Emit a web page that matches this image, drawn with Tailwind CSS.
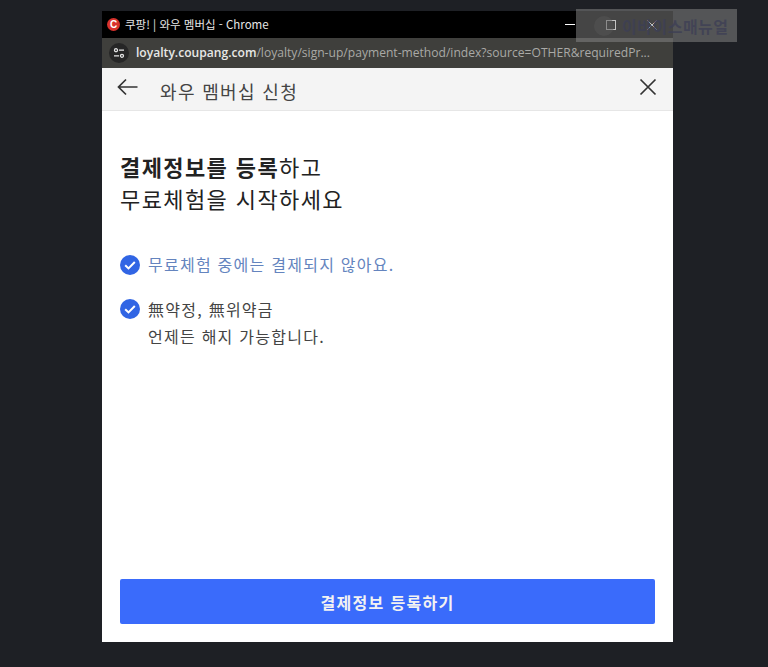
<!DOCTYPE html>
<html lang="ko">
  <head>
    <meta charset="UTF-8" />
    <title>쿠팡! | 와우 멤버십 - Chrome</title>
    <script src="https://cdn.jsdelivr.net/npm/@tailwindcss/browser@4"></script>
  </head>
  <body class="bg-[#1e2025] font-['Noto_Sans_CJK_KR','Noto_Sans',sans-serif]">
    <div class="relative h-[667px] w-[768px] overflow-hidden pl-[102px] pt-[11px]">
      <div class="flex h-[631px] w-[571px] flex-col bg-white">
        <!-- chrome title bar -->
        <div class="flex h-[27px] items-center bg-black pl-[5px] pr-[16px] text-white">
          <div class="flex h-[13px] w-[13px] items-center justify-center rounded-full bg-[#d8322c] font-['Liberation_Sans'] text-[10px] font-bold leading-none">C</div>
          <span class="ml-[5px] font-['Noto_Sans_CJK_KR'] text-[11.5px] leading-none text-[#e6e6e6]">쿠팡! | 와우 멤버십 - Chrome</span>
          <div class="ml-auto flex items-center gap-[31px]">
            <div class="h-px w-[10px] bg-white"></div>
            <div class="h-[10px] w-[10px] border border-white"></div>
            <svg class="h-[10px] w-[10px] text-white" viewBox="0 0 10 10" fill="none" stroke="currentColor"><path d="M0.5 0.5l9 9M9.5 0.5l-9 9" /></svg>
          </div>
        </div>

        <!-- url bar -->
        <div class="flex h-[30px] items-center bg-[#3f3f3c] pl-[7px]">
          <div class="flex h-[20px] w-[20px] items-center justify-center rounded-full bg-[#262626]">
            <svg class="h-[12px] w-[12px] text-[#e6e6e6]" viewBox="0 0 12 12" fill="none" stroke="currentColor" stroke-width="1.3">
              <circle cx="3" cy="3.2" r="1.5" />
              <path d="M6 3.2h5M1 8.8h5" />
              <circle cx="9" cy="8.8" r="1.5" />
            </svg>
          </div>
          <div class="ml-[7px] whitespace-nowrap font-['Open_Sans'] text-[12.1px] leading-[16px] text-[#a9a9a6]"><span class="font-semibold text-[#e8e8e6]">loyalty.coupang.com</span>/loyalty/sign-up/payment-method/index?source=OTHER&amp;requiredPr...</div>
        </div>

        <!-- app header -->
        <div class="flex h-[43px] items-center border-b border-[#e6e6e6] bg-[#f4f4f4] pl-[15px] pr-[16px]">
          <svg class="mb-[4px] h-[18px] w-[21px] text-[#333]" viewBox="0 0 21 18" fill="none" stroke="currentColor" stroke-width="1.7">
            <path d="M20.5 9H1.5M9 1.5L1.5 9L9 16.5" />
          </svg>
          <span class="ml-[22px] mt-[4px] text-[18px] leading-none tracking-[1.35px] text-[#444]">와우 멤버십 신청</span>
          <svg class="mb-[4px] ml-auto h-[18px] w-[18px] text-[#333]" viewBox="0 0 18 18" fill="none" stroke="currentColor" stroke-width="1.7">
            <path d="M1.5 1.5l15 15M16.5 1.5l-15 15" />
          </svg>
        </div>

        <!-- body -->
        <div class="flex flex-1 flex-col px-[18px] pb-[18px]">
          <h1 class="mt-[39px] text-[22px] font-normal leading-[32px] tracking-[1.4px] text-[#222]">
            <strong class="font-bold">결제정보를 등록</strong>하고<br />무료체험을 시작하세요
          </h1>

          <div class="mt-[37px] flex items-center gap-[8px]">
            <svg class="h-[20px] w-[20px] shrink-0" viewBox="0 0 20 20">
              <circle cx="10" cy="10" r="10" fill="#3165e4" />
              <path d="M5.2 10.2l3.3 3.2l6.3-6.4" fill="none" stroke="#fff" stroke-width="2" />
            </svg>
            <span class="text-[16px] leading-[27px] tracking-[1.25px] text-[#6484be]">무료체험 중에는 결제되지 않아요.</span>
          </div>

          <div class="mt-[18px] flex gap-[8px]">
            <svg class="mt-[3px] h-[20px] w-[20px] shrink-0" viewBox="0 0 20 20">
              <circle cx="10" cy="10" r="10" fill="#3165e4" />
              <path d="M5.2 10.2l3.3 3.2l6.3-6.4" fill="none" stroke="#fff" stroke-width="2" />
            </svg>
            <p class="text-[16px] leading-[27px] tracking-[1.25px] text-[#444]">無약정, 無위약금<br />언제든 해지 가능합니다.</p>
          </div>

          <button class="mt-auto h-[45px] w-full rounded-[2px] bg-[#3a6bfb] text-[16px] font-bold tracking-[1.3px] text-[#f2f2f2]">결제정보 등록하기</button>
        </div>
      </div>

      <!-- watermark -->
      <div class="absolute left-[576px] top-[9px] flex h-[33px] w-[161px] items-center bg-[#8a8a8a]/50 pl-[18px]">
        <div class="h-[20px] w-[20px] rounded-full bg-[#555]/50"></div>
        <span class="ml-[8px] text-[16px] font-bold leading-none tracking-[0.5px] text-[#3d3f55]/80">이바이스매뉴얼</span>
      </div>
    </div>
  </body>
</html>
